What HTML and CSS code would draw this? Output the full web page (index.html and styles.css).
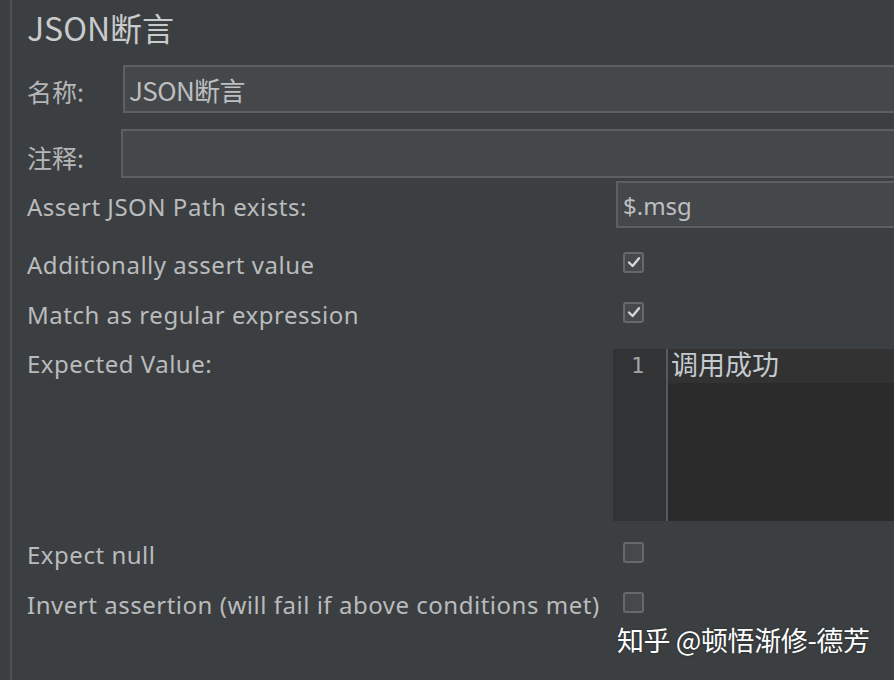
FILE: index.html
```html
<!DOCTYPE html>
<html lang="zh">
<head>
<meta charset="utf-8">
<title>JSON断言</title>
<link rel="stylesheet" href="styles.css">
</head>
<body>
<div class="panel">
  <h1 class="title">JSON断言</h1>
  <div class="field field-name">
    <span class="cn-label">名称:</span>
    <div class="textbox name-box">JSON断言</div>
  </div>
  <div class="field field-comment">
    <span class="cn-label">注释:</span>
    <div class="textbox comment-box"></div>
  </div>

  <div class="row row-path">
    <span class="label">Assert JSON Path exists:</span>
    <div class="textbox path-box">$.msg</div>
  </div>
  <div class="row row-check row-add">
    <span class="label">Additionally assert value</span>
    <span class="checkbox checked"><svg viewBox="0 0 20 20" width="20" height="20"><path d="M5 10.5 L8.6 14 L15 6.2" fill="none" stroke="#d4d6d6" stroke-width="2.4" stroke-linecap="round" stroke-linejoin="round"/></svg></span>
  </div>
  <div class="row row-check">
    <span class="label">Match as regular expression</span>
    <span class="checkbox checked"><svg viewBox="0 0 20 20" width="20" height="20"><path d="M5 10.5 L8.6 14 L15 6.2" fill="none" stroke="#d4d6d6" stroke-width="2.4" stroke-linecap="round" stroke-linejoin="round"/></svg></span>
  </div>
  <div class="row row-expected">
    <span class="label label-top">Expected Value:</span>
    <div class="editor">
      <div class="gutter"><span class="lineno">1</span></div>
      <div class="code">
        <div class="code-line current">调用成功</div>
      </div>
    </div>
  </div>
  <div class="row row-check row-null">
    <span class="label">Expect null</span>
    <span class="checkbox"></span>
  </div>
  <div class="row row-check">
    <span class="label">Invert assertion (will fail if above conditions met)</span>
    <span class="checkbox"></span>
  </div>
</div>
<div class="watermark">知乎 @顿悟渐修-德芳</div>
</body>
</html>
```

FILE: styles.css
```css
html, body {
  margin: 0;
  padding: 0;
  height: 100%;
}
body {
  background: #3c3f41;
  overflow: hidden;
  font-family: "Noto Sans", "Noto Sans CJK SC", sans-serif;
  color: #bbbbbb;
  position: relative;
}
.panel {
  margin-left: 10px;
  border-left: 2px solid #4f5254;
  height: 100%;
  padding-left: 15px;
  box-sizing: border-box;
}
.title {
  margin: 0;
  height: 65px;
  box-sizing: border-box;
  padding-top: 4px;
  font-family: "Noto Sans CJK SC", "Noto Sans", sans-serif;
  font-weight: 400;
  font-size: 32px;
  line-height: 46px;
  color: #c9cbcc;
}
.field {
  display: flex;
  align-items: center;
}
.cn-label {
  font-family: "Noto Sans CJK SC", sans-serif;
  font-size: 25px;
  line-height: 30px;
  color: #b4b6b7;
  padding-top: 4px;
}
.textbox {
  border: 2px solid #5d6062;
  background: #45484a;
  box-sizing: border-box;
  margin-right: -20px;
  flex: 1;
  color: #bdbfc0;
}
.field-name .cn-label { width: 96px; }
.name-box {
  height: 48px;
  padding-left: 4px;
  font-family: "Noto Sans CJK SC", sans-serif;
  font-size: 26px;
  line-height: 46px;
  letter-spacing: -0.6px;
}
.field-comment {
  margin-top: 16px;
}
.field-comment .cn-label { width: 94px; padding-top: 6px; }
.comment-box {
  height: 49px;
}
.row {
  display: flex;
  align-items: center;
}
.label {
  width: 589px;
  flex: none;
  font-size: 24px;
  letter-spacing: 0.52px;
  color: #b9bbbc;
}
.row-path {
  margin-top: 3px;
  height: 47px;
}
.row-path .label { padding-top: 3px; }
.path-box {
  height: 47px;
  padding-left: 5px;
  font-size: 24px;
  line-height: 45px;
}
.row-check {
  height: 50px;
}
.row-check .label { padding-top: 2px; }
.row-add { margin-top: 10px; }
.checkbox {
  width: 21px;
  height: 21px;
  margin-left: 7px;
  margin-top: -2px;
  box-sizing: border-box;
  border: 2px solid #66696b;
  border-radius: 3px;
  background: #45494a;
  display: flex;
  align-items: center;
  justify-content: center;
}
.checkbox svg { display: block; flex: none; }
.row-expected {
  margin-top: 11px;
  align-items: flex-start;
}
.label-top {
  line-height: 30px;
}
.editor {
  flex: 1;
  margin-left: -3px;
  margin-right: -20px;
  height: 172px;
  display: flex;
  background: #2b2b2b;
}
.gutter {
  width: 53px;
  flex: none;
  background: #313335;
  border-right: 2px solid #58595a;
  text-align: center;
}
.lineno {
  display: block;
  font-family: "DejaVu Sans Mono", monospace;
  font-size: 22px;
  line-height: 34px;
  color: #a2a4a6;
  padding-right: 4px;
}
.code {
  flex: 1;
}
.code-line {
  height: 34px;
  padding-left: 3px;
  font-family: "Noto Sans CJK SC", sans-serif;
  font-size: 27px;
  line-height: 30px;
  color: #c3cad0;
}
.code-line.current {
  background: #323232;
}
.row-null { margin-top: 7px; }
.watermark {
  position: absolute;
  left: 617px;
  top: 620px;
  font-family: "Noto Sans CJK SC", sans-serif;
  font-size: 27px;
  line-height: 40px;
  color: #ffffff;
  letter-spacing: -0.4px;
  text-shadow: 0 0 2px rgba(0,0,0,0.5);
}
```
